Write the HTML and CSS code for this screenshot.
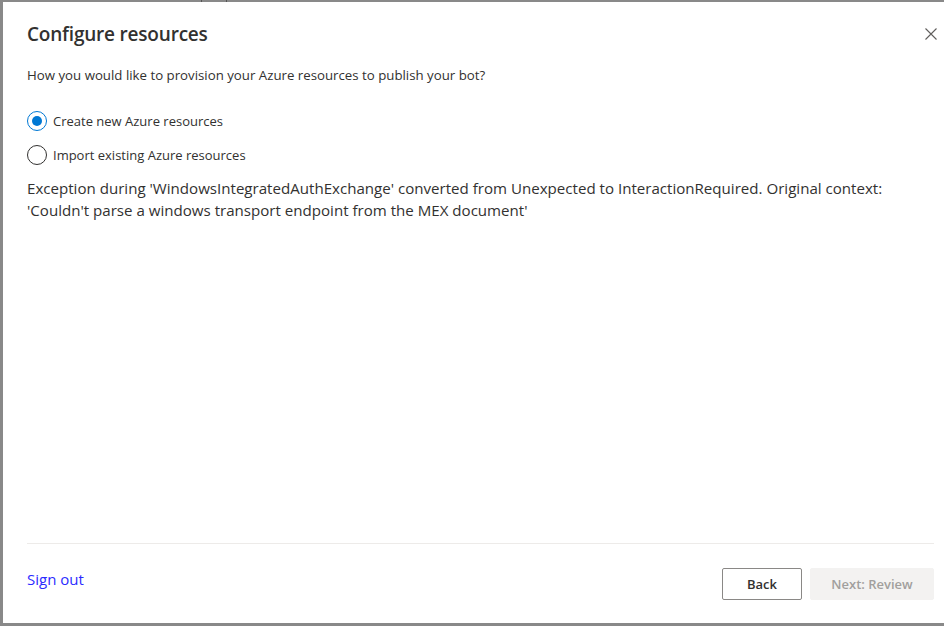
FILE: index.html
```html
<!DOCTYPE html>
<html>
<head>
<meta charset="utf-8">
<link rel="stylesheet" href="styles.css">
</head>
<body>
<div class="backdrop">
  <div class="topbar">
    <span class="tick t1"></span>
    <span class="tick t2"></span>
  </div>
  <div class="dialog">
    <div class="header">
      <h1 class="title">Configure resources</h1>
      <button class="close" aria-label="Close">
        <svg width="12" height="12" viewBox="0 0 12 12"><path d="M0.5 0.5 L11.5 11.5 M11.5 0.5 L0.5 11.5" stroke="#605e5c" stroke-width="1.1" fill="none"/></svg>
      </button>
    </div>
    <div class="body">
      <p class="subtitle">How you would like to provision your Azure resources to publish your bot?</p>
      <div class="choices">
        <label class="choice"><span class="radio checked"></span><span class="choice-label">Create new Azure resources</span></label>
        <label class="choice"><span class="radio"></span><span class="choice-label">Import existing Azure resources</span></label>
      </div>
      <p class="error">Exception during 'WindowsIntegratedAuthExchange' converted from Unexpected to InteractionRequired. Original context: 'Couldn't parse a windows transport endpoint from the MEX document'</p>
    </div>
    <div class="footer">
      <a class="signout" href="#">Sign out</a>
      <div class="actions">
        <button class="btn btn-default">Back</button>
        <button class="btn btn-disabled" disabled>Next: Review</button>
      </div>
    </div>
  </div>
</div>
</body>
</html>
```
FILE: styles.css
```css
* { box-sizing: border-box; }
html, body { margin: 0; padding: 0; }
body {
  width: 944px;
  height: 626px;
  overflow: hidden;
  font-family: "Open Sans", "Noto Sans", sans-serif;
  color: #323130;
}
.backdrop {
  width: 944px;
  height: 626px;
  background: #898989;
  padding: 2px 0 3px 3px;
  display: flex;
  flex-direction: column;
  position: relative;
}
.topbar {
  position: absolute;
  top: 0;
  left: 0;
  right: 0;
  height: 2px;
}
.tick {
  position: absolute;
  top: 0;
  width: 1px;
  height: 2px;
  background: #555;
}
.t1 { left: 201px; }
.t2 { left: 226px; }
.dialog {
  flex: 1;
  background: #fff;
  display: flex;
  flex-direction: column;
  padding: 0 0 0 24px;
}
.header {
  display: flex;
  justify-content: space-between;
  align-items: center;
  height: 62px;
  padding-top: 2px;
}
.title {
  margin: 0;
  font-size: 19px;
  font-weight: 600;
  letter-spacing: -0.2px;
  color: #323130;
}
.close {
  background: none;
  border: 0;
  padding: 0;
  width: 12px;
  height: 12px;
  margin-right: 7px;
  display: flex;
}
.body { flex: 1; }
.subtitle {
  margin: 2px 0 0;
  font-size: 13.25px;
  line-height: 18px;
  color: #323130;
}
.choices {
  margin-top: 27px;
  display: flex;
  flex-direction: column;
  gap: 14px;
}
.choice {
  display: flex;
  align-items: center;
  gap: 6px;
  font-size: 13px;
  line-height: 20px;
}
.radio {
  width: 20px;
  height: 20px;
  border: 1px solid #323130;
  border-radius: 50%;
  position: relative;
  flex: none;
}
.radio.checked { border-color: #0078d4; }
.radio.checked::after {
  content: "";
  position: absolute;
  left: 4px;
  top: 4px;
  width: 10px;
  height: 10px;
  border-radius: 50%;
  background: #0078d4;
}
.error {
  margin: 12px 0 0;
  font-size: 15.1px;
  line-height: 22px;
  max-width: 880px;
  color: #323130;
}
.footer {
  margin-right: 10px;
  border-top: 1px solid #edebe9;
  height: 80px;
  display: flex;
  justify-content: space-between;
  align-items: flex-start;
  padding-top: 23px;
}
.signout {
  color: #2b2bff;
  text-decoration: none;
  font-size: 15px;
  line-height: 24px;
}
.actions {
  display: flex;
  gap: 8px;
  margin-top: 1px;
}
.btn {
  height: 32px;
  font-family: inherit;
  font-size: 13px;
  font-weight: 600;
  border-radius: 2px;
  padding: 0 16px;
}
.btn-default {
  width: 80px;
  background: #fff;
  border: 1px solid #8a8886;
  color: #323130;
}
.btn-disabled {
  width: 124px;
  background: #f3f2f1;
  border: 1px solid #f3f2f1;
  color: #a19f9d;
}
```
